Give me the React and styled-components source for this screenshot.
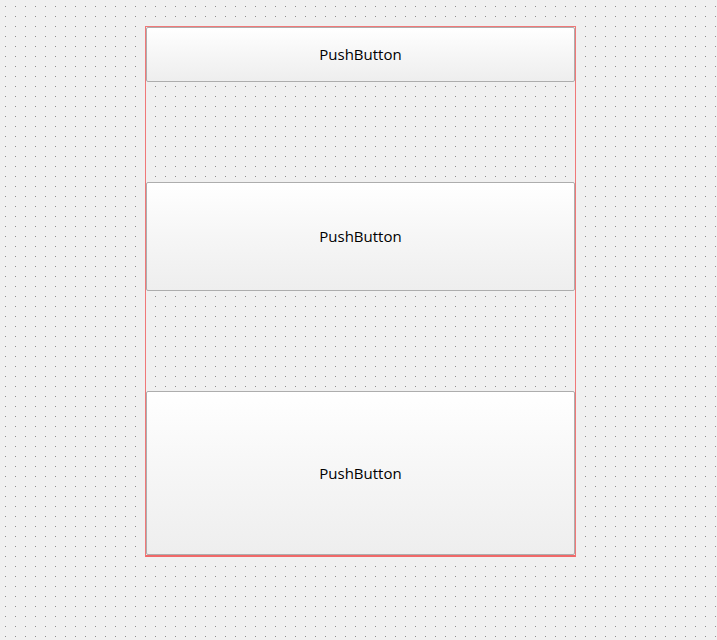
import React from "react"
import styled, { createGlobalStyle } from "styled-components"

const GlobalStyle = createGlobalStyle`
  html, body {
    margin: 0;
    padding: 0;
  }
  body {
    width: 717px;
    height: 640px;
    overflow: hidden;
    font-family: "Open Sans", "Noto Sans", sans-serif;
  }
`

// designer canvas with dotted grid
const Canvas = styled.div`
  width: 717px;
  height: 640px;
  box-sizing: border-box;
  padding: 26px 0 0 145px;
  background-color: #f0f0f0;
  background-image: radial-gradient(circle at 5.5px 6.5px, #8f8f8f 0.6px, transparent 0.9px);
  background-size: 10px 10px;
`

// selected layout frame
const Frame = styled.div`
  width: 431px;
  height: 531px;
  box-sizing: border-box;
  border: 1px solid #f07878;
  border-bottom: 2px solid #f06868;
  display: flex;
  flex-direction: column;
  gap: 100px;
`

const PushButton = styled.button`
  height: ${({ h }) => h}px;
  width: 100%;
  flex: none;
  box-sizing: border-box;
  margin: 0;
  padding: 0 0 ${({ last }) => (last ? 0 : 2)}px;
  border: 1px solid #adadad;
  border-radius: 2px;
  background: linear-gradient(to bottom, #ffffff 0%, #f6f6f6 50%, #eeeeee 100%);
  font-family: "Open Sans", "Noto Sans", sans-serif;
  font-size: 15px;
  color: #000;
  display: flex;
  align-items: center;
  justify-content: center;
`

const App = () => {
  const heights = [55, 109, 164]
  return (
    <>
      <GlobalStyle />
      <Canvas>
        <Frame>
          {heights.map((h, i) => (
            <PushButton key={i} h={h} last={i === heights.length - 1}>
              PushButton
            </PushButton>
          ))}
        </Frame>
      </Canvas>
    </>
  )
}

export default App
